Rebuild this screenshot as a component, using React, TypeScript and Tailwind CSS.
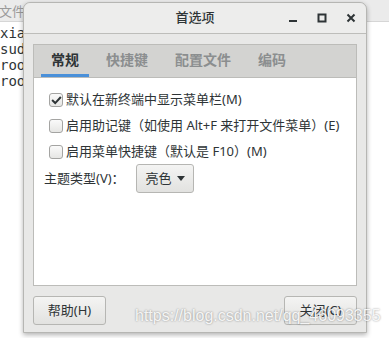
import { useState } from "react";

const font = { fontFamily: '"Noto Sans", "Noto Sans CJK SC", sans-serif' };

function CheckBox({ checked }: { checked: boolean }) {
  return (
    <span className="w-[14px] h-[14px] shrink-0 rounded-[3px] border border-[#a4a4a2] bg-gradient-to-b from-[#fafafa] to-[#e6e6e4] flex items-center justify-center">
      {checked && (
        <svg className="w-[11px] h-[11px]" viewBox="0 0 12 12" fill="none">
          <path d="M2 6.2l2.6 2.6L10 3" stroke="#2e3436" strokeWidth={2.2} strokeLinecap="square" />
        </svg>
      )}
    </span>
  );
}

const tabs = ["常规", "快捷键", "配置文件", "编码"];

export default function App() {
  const [opts] = useState([
    { label: "默认在新终端中显示菜单栏(M)", checked: true },
    { label: "启用助记键（如使用 Alt+F 来打开文件菜单）(E)", checked: false },
    { label: "启用菜单快捷键（默认是 F10）(M)", checked: false },
  ]);

  return (
    <div className="relative w-[389px] h-[338px] overflow-hidden bg-white text-[#2e3436]" style={font}>
      {/* terminal behind */}
      <div className="h-[22px] bg-[#ebebeb] border-b border-[#d6d6d6] text-[13px] text-[#9a9a9a] leading-[22px] -ml-[1px]">
        文件
      </div>
      <div className="pt-[3px] text-[14px] leading-[16px] text-[#2e3436]" style={{ fontFamily: '"DejaVu Sans Mono", monospace' }}>
        <div>xia</div>
        <div>sud</div>
        <div>roo</div>
        <div>roo</div>
      </div>

      {/* preferences dialog */}
      <div className="absolute left-[23px] top-[2px] w-[344px] h-[331px] flex flex-col rounded-t-[7px] border border-[#b6b6b3] bg-[#e8e8e7] shadow-[0_2px_5px_rgba(0,0,0,0.3)]">
        <div className="h-[31px] shrink-0 flex items-center relative bg-[#ededec] rounded-t-[7px] border-b border-[#bdbdba]">
          <div className="flex-1 text-center text-[13px] font-medium">首选项</div>
          <div className="absolute right-[10px] top-0 h-full flex items-center gap-[19px] text-[#2e3436]">
            <svg className="w-[10px] h-[10px]" viewBox="0 0 10 10">
              <rect x="1" y="7" width="8" height="2" fill="currentColor" />
            </svg>
            <svg className="w-[10px] h-[10px]" viewBox="0 0 10 10">
              <rect x="1.5" y="1.5" width="7" height="7" fill="none" stroke="currentColor" strokeWidth="2" />
            </svg>
            <svg className="w-[10px] h-[10px]" viewBox="0 0 10 10">
              <path d="M1.5 1.5l7 7M8.5 1.5l-7 7" stroke="currentColor" strokeWidth="2" />
            </svg>
          </div>
        </div>

        <div className="flex-1 flex flex-col px-[9px] pt-[10px] pb-[7px]">
          <div className="h-[242px] flex flex-col border border-[#bcbcb9]">
            <div className="h-[33px] shrink-0 flex pl-[7px] gap-[7px] bg-[#d3d3d1] border-b border-[#bcbcb9]">
              {tabs.map((t, i) => (
                <div
                  key={t}
                  className={`px-[10px] flex items-center text-[14px] font-bold border-b-[3px] ${
                    i === 0 ? "border-[#4a90d9] text-[#2e3436]" : "border-transparent text-[#8b8e8f]"
                  }`}
                >
                  {t}
                </div>
              ))}
            </div>
            <div className="flex-1 bg-white flex flex-col pt-[9px] text-[13px]">
              {opts.map((o) => (
                <div key={o.label} className="h-[26px] flex items-center gap-[3px] pl-[15px]">
                  <CheckBox checked={o.checked} />
                  <span>{o.label}</span>
                </div>
              ))}
              <div className="flex items-center pl-[10px] mt-[-1px]">
                <span className="w-[92px]">主题类型(V)：</span>
                <div className="w-[58px] h-[29px] flex items-center justify-center gap-[5px] rounded-[3px] border border-[#b6b6b3] bg-gradient-to-b from-[#f4f4f3] to-[#e2e2e0]">
                  <span>亮色</span>
                  <svg className="w-[8px] h-[5px]" viewBox="0 0 8 5">
                    <path d="M0 0h8L4 5z" fill="#2e3436" />
                  </svg>
                </div>
              </div>
            </div>
          </div>

          <div className="mt-[10px] flex justify-between text-[13px]">
            <button className="w-[73px] h-[29px] rounded-[3px] border border-[#b6b6b3] bg-gradient-to-b from-[#f4f4f3] to-[#e2e2e0]">
              帮助(H)
            </button>
            <button className="w-[73px] h-[29px] rounded-[3px] border border-[#b6b6b3] bg-gradient-to-b from-[#f4f4f3] to-[#e2e2e0]">
              关闭(C)
            </button>
          </div>
        </div>
      </div>

      {/* watermark */}
      <div
        className="absolute left-[135px] top-[304px] text-[16px] pointer-events-none"
        style={{
          fontFamily: '"Liberation Sans", Arial, sans-serif',
          color: "rgba(255,255,255,0.9)",
          textShadow: "0 0 2px rgba(0,0,0,0.45)",
        }}
      >
        https://blog.csdn.net/qq_46093355
      </div>
    </div>
  );
}
